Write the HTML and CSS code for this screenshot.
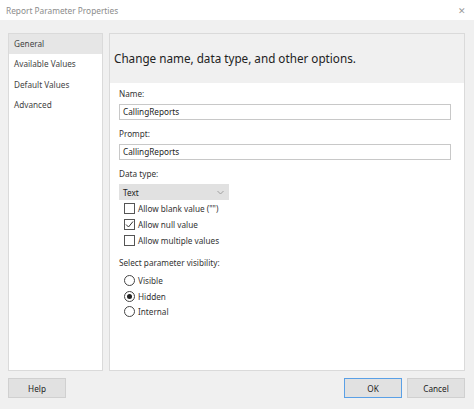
FILE: index.html
```html
<!DOCTYPE html>
<html>
<head>
<meta charset="utf-8">
<link rel="stylesheet" href="styles.css">
</head>
<body>
<div class="window">
  <div class="titlebar">
    <span class="title">Report Parameter Properties</span>
    <span class="close">&#x2715;</span>
  </div>
  <div class="main">
    <div class="nav">
      <div class="nav-item selected">General</div>
      <div class="nav-item">Available Values</div>
      <div class="nav-item">Default Values</div>
      <div class="nav-item">Advanced</div>
    </div>
    <div class="content">
      <div class="header">Change name, data type, and other options.</div>
      <div class="form">
        <div class="label">Name:</div>
        <div class="input">CallingReports</div>
        <div class="label">Prompt:</div>
        <div class="input">CallingReports</div>
        <div class="label">Data type:</div>
        <div class="select"><span>Text</span>
          <svg class="chev" width="7" height="5" viewBox="0 0 7 5"><path d="M0.5 1 L3.5 4 L6.5 1" fill="none" stroke="#9a9a9a" stroke-width="0.9"/></svg>
        </div>
        <div class="checks">
          <div class="check"><span class="box"></span>Allow blank value ("")</div>
          <div class="check"><span class="box"><svg width="11" height="11" viewBox="0 0 11 11"><path d="M2 5.5 L4.5 8 L9 2.5" fill="none" stroke="#333" stroke-width="1"/></svg></span>Allow null value</div>
          <div class="check"><span class="box"></span>Allow multiple values</div>
        </div>
        <div class="label vis">Select parameter visibility:</div>
        <div class="radios">
          <div class="radio"><span class="circle"></span>Visible</div>
          <div class="radio"><span class="circle on"></span>Hidden</div>
          <div class="radio"><span class="circle"></span>Internal</div>
        </div>
      </div>
    </div>
  </div>
  <div class="footer">
    <div class="btn">Help</div>
    <div class="spacer"></div>
    <div class="btn default">OK</div>
    <div class="btn">Cancel</div>
  </div>
</div>
</body>
</html>
```
FILE: styles.css
```css
html, body {
  margin: 0;
  padding: 0;
}
body {
  width: 474px;
  height: 409px;
  background: #f0f0f0;
  font-family: "Noto Sans", "Open Sans", sans-serif;
  font-size: 8.2px;
  color: #333;
  overflow: hidden;
}
.window {
  width: 474px;
  height: 409px;
}
.titlebar {
  height: 20px;
  background: #ffffff;
  display: flex;
  align-items: center;
  justify-content: space-between;
  padding: 0 8px 0 6px;
  box-sizing: border-box;
}
.title {
  color: #8c8c8c;
  font-size: 8.3px;
}
.close {
  color: #9a9a9a;
  font-size: 9px;
}
.main {
  display: flex;
  gap: 6px;
  padding: 13px 9px 0 8px;
  height: 351px;
  box-sizing: border-box;
}
.nav {
  width: 95px;
  background: #fff;
  border: 1px solid #dadada;
  box-sizing: border-box;
}
.nav-item {
  height: 20.3px;
  line-height: 20px;
  padding-left: 5px;
  color: #444;
}
.nav-item.selected {
  background: #e6e6e6;
}
.content {
  flex: 1;
  background: #fff;
  border: 1px solid #dadada;
  box-sizing: border-box;
  display: flex;
  flex-direction: column;
}
.header {
  height: 49px;
  background: #f0f0f0;
  font-size: 11.7px;
  color: #222;
  display: flex;
  align-items: center;
  padding-left: 4px;
  padding-bottom: 2px;
  box-sizing: border-box;
}
.form {
  padding: 5px 13px 0 9px;
  display: flex;
  flex-direction: column;
}
.label {
  height: 12px;
  line-height: 12px;
  margin-bottom: 4px;
  color: #333;
}
.input {
  height: 16px;
  border: 1px solid #c8c8c8;
  box-sizing: border-box;
  line-height: 14px;
  padding-left: 3px;
  margin-bottom: 8px;
  color: #222;
}
.select {
  width: 110px;
  height: 16px;
  background: #e1e1e1;
  border: 1px solid #e1e1e1;
  box-sizing: border-box;
  display: flex;
  align-items: center;
  justify-content: space-between;
  padding: 0 4px 0 3px;
  color: #222;
}
.checks {
  padding-left: 5px;
  margin-top: 0px;
}
.check, .radio {
  height: 16px;
  display: flex;
  align-items: center;
  gap: 3px;
}
.box {
  width: 11px;
  height: 11px;
  border: 1px solid #555;
  box-sizing: border-box;
  display: flex;
  align-items: center;
  justify-content: center;
  background: #fff;
}
.box svg {
  flex: none;
}
.label.vis {
  margin-top: 9px;
  margin-bottom: 4px;
}
.radios {
  padding-left: 5px;
}
.radio {
  height: 15.5px;
}
.circle {
  width: 11px;
  height: 11px;
  border: 1px solid #444;
  border-radius: 50%;
  box-sizing: border-box;
  display: flex;
  align-items: center;
  justify-content: center;
}
.circle.on::after {
  content: "";
  width: 5px;
  height: 5px;
  border-radius: 50%;
  background: #222;
}
.footer {
  display: flex;
  gap: 5px;
  padding: 7px 9px 0 8px;
}
.spacer {
  flex: 1;
}
.btn {
  width: 58px;
  height: 20px;
  background: #e1e1e1;
  border: 1px solid #d0d0d0;
  box-sizing: border-box;
  display: flex;
  align-items: center;
  justify-content: center;
  color: #222;
}
.btn.default {
  border: 1px solid #5aa0e6;
}
```
